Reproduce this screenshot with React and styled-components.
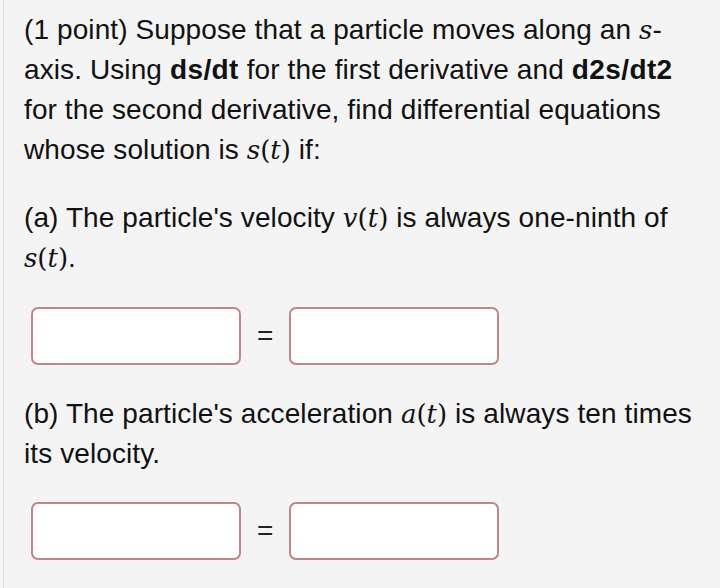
import React from "react";
import styled, { createGlobalStyle } from "styled-components";

const Global = createGlobalStyle`
  html, body { margin: 0; padding: 0; background: #f7f7f7; }
  body { font-family: "Liberation Sans", Arial, sans-serif; }
`;

const Page = styled.div`
  margin-left: 3px;
  min-height: 588px;
  box-sizing: border-box;
  background: #f4f4f4;
  border-left: 1px solid #dcdcdc;
  padding: 10px 20px 0 20px;
  color: #111;
  font-size: 28px;
  line-height: 40px;
  letter-spacing: 0.1px;
`;

const Para = styled.p`
  margin: 0 0 ${(p) => p.$gap || 28}px 0;
`;

const Bold = styled.b`
  font-weight: bold;
  letter-spacing: 0.4px;
`;

const M = styled.span`
  font-family: "DejaVu Serif", "Liberation Serif", serif;
  font-size: 26px;
  letter-spacing: 0;
  font-style: ${(p) => (p.$up ? "normal" : "italic")};
  font-weight: normal;
`;

const Math = ({ f, v }) => (
  <>
    <M>{f}</M>
    <M $up>(</M>
    <M>{v}</M>
    <M $up>)</M>
  </>
);

const Row = styled.div`
  display: flex;
  align-items: center;
  gap: 16px;
  margin: 0 0 29px 7px;
`;

const Box = styled.input`
  width: 210px;
  height: 58px;
  box-sizing: border-box;
  border: 2px solid #bf8587;
  border-radius: 7px;
  background: #fff;
  outline: none;
  padding: 0 8px;
`;

const Eq = styled.span`
  font-size: 28px;
  color: #222;
`;

export default function App() {
  return (
    <>
      <Global />
      <Page>
        <Para>
          (1 point) Suppose that a particle moves along an <M>s</M>-
          <br />
          axis. Using <Bold>ds/dt</Bold> for the first derivative and <Bold>d2s/dt2</Bold>
          <br />
          for the second derivative, find differential equations
          <br />
          whose solution is <Math f="s" v="t" /> if:
        </Para>
        <Para $gap={29}>
          (a) The particle's velocity <Math f="v" v="t" /> is always one-ninth of
          <br />
          <Math f="s" v="t" />.
        </Para>
        <Row>
          <Box type="text" />
          <Eq>=</Eq>
          <Box type="text" />
        </Row>
        <Para>
          (b) The particle's acceleration <Math f="a" v="t" /> is always ten times
          <br />
          its velocity.
        </Para>
        <Row>
          <Box type="text" />
          <Eq>=</Eq>
          <Box type="text" />
        </Row>
      </Page>
    </>
  );
}
